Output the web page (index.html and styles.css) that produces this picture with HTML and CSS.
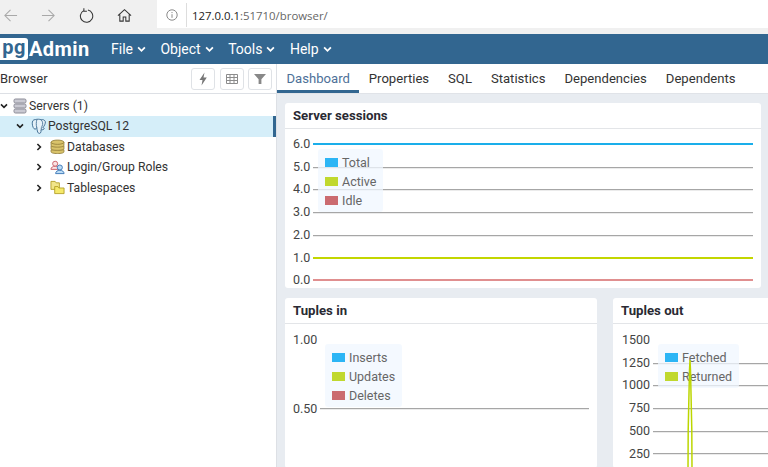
FILE: index.html
```html
<!DOCTYPE html>
<html lang="en">

<head>
    <meta charset="UTF-8">
    <title>pgAdmin 4</title>
    <link rel="stylesheet" href="styles.css">
</head>

<body>
    <div class="chrome">
        <div class="chrome-buttons">
            <svg class="chrome-icon" viewBox="0 0 16 16"><path d="M15 8H2M8 2 2 8l6 6" class="stroke-light"/></svg>
            <svg class="chrome-icon" viewBox="0 0 16 16"><path d="M1 8h13M8 2l6 6-6 6" class="stroke-light"/></svg>
            <svg class="chrome-icon" viewBox="0 0 16 16"><path d="M5 2.2A6.6 6.6 0 1 0 9.5 1.6M5.2 -0.4V2.8H8.4" class="stroke-dark" transform="translate(0 .6)"/></svg>
            <svg class="chrome-icon" viewBox="0 0 16 16"><path d="M1 8.2 8 1.8l7 6.4M3 7v7h3.6V9.6h2.8V14H13V7" class="stroke-dark"/></svg>
        </div>
        <div class="address">
            <svg class="info-icon" viewBox="0 0 12 12"><circle cx="6" cy="6" r="5.2"/><path d="M6 5.2v3.6M6 3v1.1"/></svg>
            <span class="address-sep"></span>
            <span class="url">127.0.0.1<span class="url-rest">:51710/browser/</span></span>
        </div>
    </div>

    <div class="navbar">
        <div class="logo"><span class="logo-pg">pg</span>Admin</div>
        <a class="menu">File<svg class="caret" viewBox="0 0 8 6"><path d="M1 1.2 4 4.2 7 1.2"/></svg></a>
        <a class="menu">Object<svg class="caret" viewBox="0 0 8 6"><path d="M1 1.2 4 4.2 7 1.2"/></svg></a>
        <a class="menu">Tools<svg class="caret" viewBox="0 0 8 6"><path d="M1 1.2 4 4.2 7 1.2"/></svg></a>
        <a class="menu">Help<svg class="caret" viewBox="0 0 8 6"><path d="M1 1.2 4 4.2 7 1.2"/></svg></a>
    </div>

    <div class="workspace">
        <div class="browser-panel">
            <div class="panel-head">
                <span class="panel-title">Browser</span>
                <div class="tools">
                    <button class="tool"><svg viewBox="0 0 12 14"><path d="M7.500 .5 2.500 8h3L4.500 13.500 9.800 5.500H6.500Z" fill="#777"/></svg></button>
                    <button class="tool"><svg viewBox="0 0 14 12"><path d="M1.500 1.500h11v9h-11ZM1.500 4.500h11M1.500 7.500h11M5 1.500v9M9 1.500v9" fill="none" stroke="#8c8c8c"/></svg></button>
                    <button class="tool"><svg viewBox="0 0 14 12"><path d="M1 1h12L8.400 6.200V11H5.600V6.200Z" fill="#888"/></svg></button>
                </div>
            </div>
            <ul class="tree">
                <li class="node level-0">
                    <svg class="twist" viewBox="0 0 8 8"><path d="M1 2.400 4 5.400 7 2.400"/></svg>
                    <svg class="node-icon servers-icon" viewBox="0 0 14 16"><g fill="#c9c9d2" stroke="#8d8d98"><rect x="1" y="1" width="12" height="4" rx="1.400"/><rect x="1" y="6" width="12" height="4" rx="1.400"/><rect x="1" y="11" width="12" height="4" rx="1.400"/></g></svg>
                    Servers (1)
                </li>
                <li class="node level-1 selected">
                    <svg class="twist" viewBox="0 0 8 8"><path d="M1 2.400 4 5.400 7 2.400"/></svg>
                    <svg class="node-icon pg-icon" viewBox="0 0 16 16"><path d="M4 1.500C2 1.500 1 3 1.200 5.500 1.400 8 2.500 10.500 3.800 10.500c.7 0 1.200-.8 1.600-1.600.2 1.600.4 3 .9 4.400.5 1.200 1.800 1.600 2.600.8.600-.6.600-1.800.5-3.100 1.200.3 2.600 0 3-.8.300-.6-.5-1-1.300-1 1.300-1.600 2.700-4 2.400-5.700C13.200 2 11 1 9.500 1.700 8 1 6 1 4 1.500Z" fill="#e6f1f8" stroke="#3f6d92" stroke-width=".9"/><path d="M5.500 1.600C4.800 4 4.800 6.800 5.400 8.900M9.500 1.700c1.600 1.500 2 4 .9 6-.4.800-.9 1.600-.8 3" fill="none" stroke="#3f6d92" stroke-width=".8"/></svg>
                    PostgreSQL 12
                </li>
                <li class="node level-2">
                    <svg class="twist" viewBox="0 0 8 8"><path d="M2.400 1 5.400 4 2.400 7"/></svg>
                    <svg class="node-icon" viewBox="0 0 14 14"><g fill="#d9c36a" stroke="#94803a" stroke-width=".8"><path d="M1 10v2c0 1 2.500 1.600 6 1.600s6-.6 6-1.600v-2Z"/><path d="M1 6.500v2.500c0 1 2.500 1.600 6 1.600s6-.6 6-1.600V6.500Z"/><path d="M1 3v3c0 1 2.500 1.600 6 1.600s6-.6 6-1.600V3Z"/><ellipse cx="7" cy="3" rx="6" ry="2"/></g></svg>
                    Databases
                </li>
                <li class="node level-2">
                    <svg class="twist" viewBox="0 0 8 8"><path d="M2.400 1 5.400 4 2.400 7"/></svg>
                    <svg class="node-icon" viewBox="0 0 16 16"><circle cx="5.500" cy="4" r="2.700" fill="#fbe3e3" stroke="#c9606a"/><path d="M1 10c0-2.200 2-3.300 4.500-3.300S10 7.800 10 10Z" fill="#fbe3e3" stroke="#c9606a"/><circle cx="10.500" cy="8" r="2.700" fill="#bcdcf5" stroke="#3d78b5"/><path d="M6 14.500c0-2.300 2-3.500 4.500-3.500s4.500 1.200 4.500 3.500Z" fill="#bcdcf5" stroke="#3d78b5"/></svg>
                    Login/Group Roles
                </li>
                <li class="node level-2">
                    <svg class="twist" viewBox="0 0 8 8"><path d="M2.400 1 5.400 4 2.400 7"/></svg>
                    <svg class="node-icon" viewBox="0 0 16 16"><g stroke="#b09a20" stroke-width=".9"><path d="M1 1.500h4.500l1 1.500H10v7H1Z" fill="#f1e58a"/><path d="M5 7h3.500l1 1.500H15V14.500H5Z" fill="#f5e96a"/></g></svg>
                    Tablespaces
                </li>
            </ul>
        </div>

        <div class="main-panel">
            <div class="tabs">
                <a class="tab active">Dashboard</a>
                <a class="tab">Properties</a>
                <a class="tab">SQL</a>
                <a class="tab">Statistics</a>
                <a class="tab">Dependencies</a>
                <a class="tab">Dependents</a>
            </div>
            <div class="dashboard">
                <div class="card sessions">
                    <h3 class="card-title">Server sessions</h3>
                    <div class="chart chart-sessions">
                        <div class="row"><span class="tick">6.0</span><i class="line line-total"></i></div>
                        <div class="row"><span class="tick">5.0</span><i class="line"></i></div>
                        <div class="row"><span class="tick">4.0</span><i class="line"></i></div>
                        <div class="row"><span class="tick">3.0</span><i class="line"></i></div>
                        <div class="row"><span class="tick">2.0</span><i class="line"></i></div>
                        <div class="row"><span class="tick">1.0</span><i class="line line-active"></i></div>
                        <div class="row"><span class="tick">0.0</span><i class="line line-idle"></i></div>
                        <div class="legend">
                            <div class="legend-item"><b class="swatch blue"></b>Total</div>
                            <div class="legend-item"><b class="swatch green"></b>Active</div>
                            <div class="legend-item"><b class="swatch red"></b>Idle</div>
                        </div>
                    </div>
                </div>
                <div class="card-row">
                    <div class="card tuples-in">
                        <h3 class="card-title">Tuples in</h3>
                        <div class="chart chart-in">
                            <div class="row tall"><span class="tick">1.00</span></div>
                            <div class="row tall"><span class="tick">0.50</span><i class="line"></i></div>
                            <div class="legend">
                                <div class="legend-item"><b class="swatch blue"></b>Inserts</div>
                                <div class="legend-item"><b class="swatch green"></b>Updates</div>
                                <div class="legend-item"><b class="swatch red"></b>Deletes</div>
                            </div>
                        </div>
                    </div>
                    <div class="card tuples-out">
                        <h3 class="card-title">Tuples out</h3>
                        <div class="chart chart-out">
                            <div class="row"><span class="tick">1500</span></div>
                            <div class="row"><span class="tick">1250</span><i class="line"></i></div>
                            <div class="row"><span class="tick">1000</span><i class="line"></i></div>
                            <div class="row"><span class="tick">750</span><i class="line"></i></div>
                            <div class="row"><span class="tick">500</span><i class="line"></i></div>
                            <div class="row"><span class="tick">250</span><i class="line"></i></div>
                            <div class="legend">
                                <div class="legend-item"><b class="swatch blue"></b>Fetched</div>
                                <div class="legend-item"><b class="swatch green"></b>Returned</div>
                            </div>
                            <svg class="spike" viewBox="0 0 10 110"><path d="M3 110 3.200 70 4.500 10 5 0 5.500 10 6.800 70 7 110" fill="none" stroke="#bcd600" stroke-width="1.500"/></svg>
                        </div>
                    </div>
                </div>
            </div>
        </div>
    </div>
</body>

</html>
```

FILE: styles.css
```css
* {
    box-sizing: border-box;
}

html, body {
    height: 100%;
}

body {
    margin: 0;
    width: 768px;
    height: 467px;
    overflow: hidden;
    display: flex;
    flex-direction: column;
    font-family: Roboto, "Liberation Sans", sans-serif;
    font-size: 13px;
    color: #333;
    background-color: #fff;
}

/* browser toolbar */
.chrome {
    height: 34px;
    flex: none;
    display: flex;
    align-items: flex-start;
    background-color: #f0f0f0;
}

.chrome-buttons {
    width: 157px;
    height: 30px;
    flex: none;
    display: flex;
    align-items: center;
    gap: 23px;
    padding-left: 3px;
}

.chrome-icon {
    width: 15px;
    height: 15px;
    flex: none;
    fill: none;
    stroke-width: 1.1;
}

.stroke-light {
    stroke: #a8a8a8;
}

.stroke-dark {
    stroke: #333;
}

.address {
    flex: 1;
    height: 28px;
    display: flex;
    align-items: center;
    background-color: #fff;
    padding-left: 9px;
    padding-top: 2px;
}

.info-icon {
    width: 12px;
    height: 12px;
    fill: none;
    stroke: #8a8a8a;
    stroke-width: 1;
}

.address-sep {
    width: 1px;
    height: 24px;
    margin: 0 5px 0 8px;
    background-color: #ddd;
}

.url {
    font-family: "Open Sans", sans-serif;
    font-size: 11.4px;
    color: #222;
}

.url-rest {
    color: #666;
}

/* app navbar */
.navbar {
    height: 30px;
    flex: none;
    display: flex;
    align-items: center;
    background-color: #326690;
    color: #fff;
}

.logo {
    width: 111px;
    flex: none;
    display: flex;
    align-items: center;
    font-size: 20px;
    font-weight: 700;
    letter-spacing: .4px;
}

.logo-pg {
    width: 28px;
    height: 22px;
    margin-right: 1px;
    line-height: 18px;
    text-align: center;
    background-color: #fff;
    color: #326690;
    border-radius: 0 3px 3px 0;
}

.menu {
    display: flex;
    align-items: center;
    gap: 4px;
    margin-right: 14.5px;
    font-size: 14px;
}

.caret {
    width: 9px;
    height: 7px;
    fill: none;
    stroke: #fff;
    stroke-width: 1.6;
}

.workspace {
    flex: 1;
    display: flex;
    min-height: 0;
}

/* left tree */
.browser-panel {
    width: 277px;
    flex: none;
    border-right: 1px solid #dde0e5;
}

.panel-head {
    height: 30px;
    display: flex;
    align-items: center;
    justify-content: space-between;
    padding-right: 4px;
    border-bottom: 1px solid #dde0e5;
}

.panel-title {
    font-size: 13px;
    color: #333;
}

.tools {
    display: flex;
    gap: 4.5px;
}

.tool {
    width: 24px;
    height: 22px;
    padding: 0;
    display: flex;
    align-items: center;
    justify-content: center;
    background-color: #fff;
    border: 1px solid #dfe2e6;
    border-radius: 3px;
}

.tool svg {
    width: 14px;
    height: 14px;
}

.tree {
    list-style: none;
    margin: 1.5px 0 0;
    padding: 0;
}

.node {
    height: 20.5px;
    display: flex;
    align-items: center;
    white-space: nowrap;
    font-size: 12.2px;
}

.level-1 {
    padding-left: 16px;
}

.level-2 {
    padding-left: 35px;
}

.selected {
    background-color: #d5eef9;
    border-right: 3px solid #326690;
}

.twist {
    width: 8px;
    height: 8px;
    margin-right: 7px;
    flex: none;
    fill: none;
    stroke: #222;
    stroke-width: 1.6;
}

.level-0 .twist {
    margin-right: 5px;
}

.node-icon {
    width: 15px;
    height: 15px;
    margin-right: 2px;
    flex: none;
}

.servers-icon {
    width: 14px;
    height: 16px;
}

.pg-icon {
    width: 17px;
    height: 17px;
    margin-right: 0;
}

/* right side */
.main-panel {
    flex: 1;
    min-width: 0;
    display: flex;
    flex-direction: column;
    background-color: #e8ecf1;
}

.tabs {
    height: 30px;
    flex: none;
    display: flex;
    background-color: #fff;
    border-bottom: 1px solid #e0e3e8;
}

.tab {
    padding: 7px 9.5px 0;
    font-size: 13.1px;
    line-height: 16px;
    color: #333;
    white-space: nowrap;
}

.tab.active {
    color: #4d7098;
    border-bottom: 3px solid #326690;
}

.dashboard {
    flex: 1;
    padding: 9px 7px 0 8px;
    overflow: hidden;
}

.card {
    background-color: #fff;
    border-radius: 3px;
    overflow: hidden;
}

.sessions {
    height: 185px;
}

.card-title {
    height: 26px;
    margin: 0;
    padding: 5px 8px 0;
    font-size: 13.2px;
    font-weight: 700;
    color: #2a2a33;
    border-bottom: 1px solid #e3e5e8;
}

.card-row {
    display: flex;
    gap: 16px;
    margin-top: 10px;
    margin-right: -100px;
}

.tuples-in {
    width: 312px;
    height: 170px;
    flex: none;
}

.tuples-out {
    width: 260px;
    height: 170px;
    flex: none;
}

.chart {
    position: relative;
    padding: 5px 8px 0;
}

.chart-sessions {
    padding-top: 4px;
}

.row {
    height: 22.7px;
    display: flex;
    align-items: center;
    gap: 3px;
}

.row.tall {
    height: 69px;
    align-items: flex-start;
}

.row.tall .tick {
    line-height: 20px;
    margin-top: 1px;
}

.row.tall .line {
    margin-top: 10px;
}

.tick {
    width: 17px;
    flex: none;
    font-size: 12.5px;
    line-height: 1;
    color: #444;
    text-align: right;
}

.chart-in .tick {
    width: 24px;
}

.chart-out {
    padding-left: 7px;
    padding-right: 0;
}

.chart-out .tick {
    width: 30px;
}

.line {
    flex: 1;
    height: 1px;
    background-color: #a6a6a6;
    box-shadow: 0 1px 0 rgba(0, 0, 0, .08);
}

.line.line-total {
    height: 2px;
    background-color: #1aaeea;
    box-shadow: none;
}

.line.line-active {
    height: 2px;
    background-color: #c3d600;
    box-shadow: none;
}

.line.line-idle {
    height: 2px;
    background-color: #e08f8f;
    box-shadow: none;
}

/* legends lie over the plotted lines */
.legend {
    position: absolute;
    padding: 4px 7px 2px;
    background-color: rgba(240, 247, 255, .75);
    border-radius: 3px;
    font-size: 12.5px;
    color: #666;
}

.chart-sessions .legend {
    left: 33px;
    top: 20px;
    width: 65px;
}

.chart-in .legend {
    left: 40px;
    top: 20px;
    width: 77px;
}

.chart-out .legend {
    left: 45px;
    top: 20px;
    width: 81px;
}

.legend-item {
    height: 19px;
    display: flex;
    align-items: center;
    gap: 4px;
    white-space: nowrap;
}

.swatch {
    width: 13px;
    height: 9px;
    flex: none;
}

.blue {
    background-color: #2cb5f5;
}

.green {
    background-color: #c0d82e;
}

.red {
    background-color: #cb6b70;
}

.spike {
    position: absolute;
    left: 72px;
    top: 36px;
    width: 10px;
    height: 110px;
}
```
